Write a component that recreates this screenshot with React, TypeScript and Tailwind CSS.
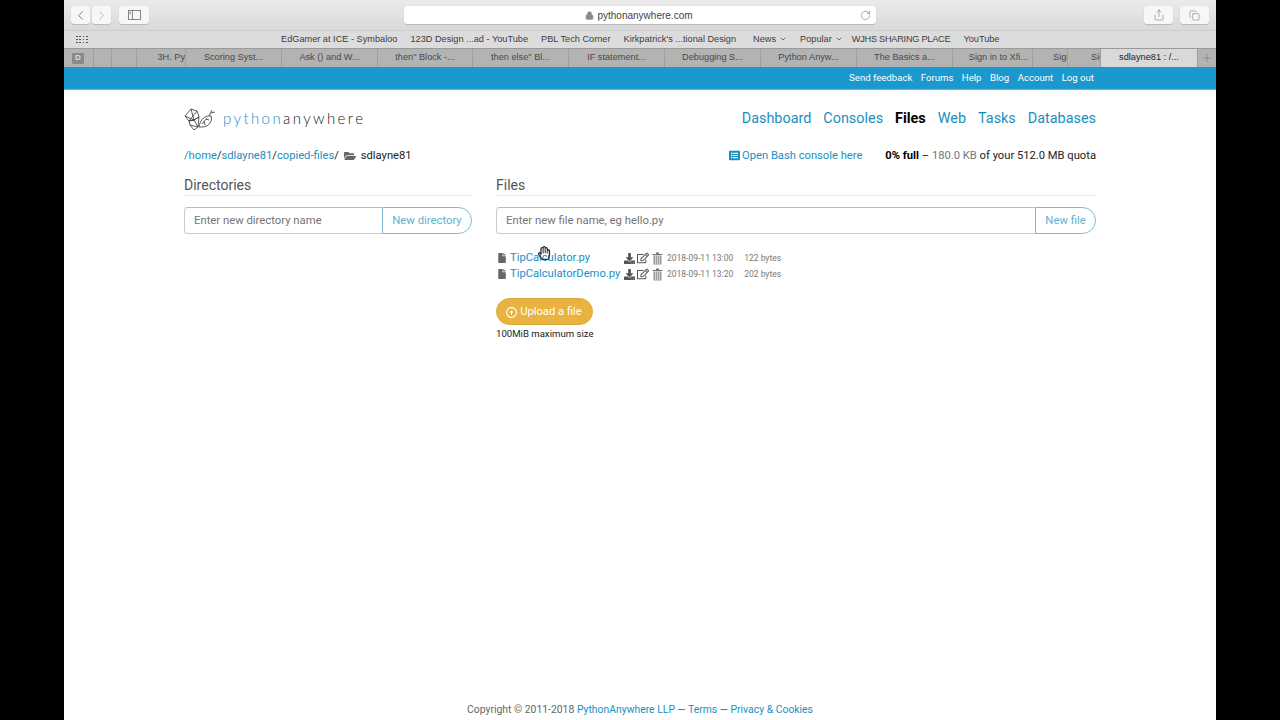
import { ChevronDown, ChevronLeft, ChevronRight, Lock, Plus, RotateCw, Share, Copy } from "lucide-react";
import { FaDownload, FaFile, FaFolderOpen, FaListAlt, FaRegEdit, FaRegHandPaper } from "react-icons/fa";
import { MdOutlineArrowCircleUp } from "react-icons/md";

const SAFARI = "font-['Liberation_Sans',sans-serif]";
const LINK = "text-[#1a8fbf]";

const bookmarks: { label: string; menu?: boolean; className?: string }[] = [
  { label: "EdGamer at ICE - Symbaloo" },
  { label: "123D Design ...ad - YouTube" },
  { label: "PBL Tech Corner" },
  { label: "Kirkpatrick's ...tional Design" },
  { label: "News", menu: true, className: "ml-[4px]" },
  { label: "Popular", menu: true },
  { label: "WJHS SHARING PLACE", className: "-ml-[4px] tracking-[-0.25px]" },
  { label: "YouTube" },
];

const tabs: { label: string; w: string; align?: string }[] = [
  { label: "", w: "w-[18px]" },
  { label: "", w: "w-[25px]" },
  { label: "3H. Py", w: "w-[49px]", align: "justify-end" },
  { label: "Scoring Syst...", w: "w-[96px]" },
  { label: "Ask () and W...", w: "w-[96px]" },
  { label: 'then" Block -...', w: "w-[95px]" },
  { label: 'then else" Bl...', w: "w-[96px]" },
  { label: "IF statement...", w: "w-[96px]" },
  { label: "Debugging S...", w: "w-[96px]" },
  { label: "Python Anyw...", w: "w-[96px]" },
  { label: "The Basics a...", w: "w-[96px]" },
  { label: "Sign in to Xfi...", w: "w-[80px]", align: "justify-end pr-1" },
  { label: "Sign", w: "w-[35px]", align: "justify-start pl-[20px]" },
  { label: "Sign", w: "w-[33px]", align: "justify-start pl-[23px]" },
];

const topLinks = ["Send feedback", "Forums", "Help", "Blog", "Account", "Log out"];
const navLinks = ["Dashboard", "Consoles", "Files", "Web", "Tasks", "Databases"];

const files = [
  { name: "TipCalculator.py", date: "2018-09-11 13:00", size: "122 bytes" },
  { name: "TipCalculatorDemo.py", date: "2018-09-11 13:20", size: "202 bytes" },
];

function ToolButton({ children, className }: { children: React.ReactNode; className: string }) {
  return (
    <div className={`flex h-[18px] items-center justify-center rounded-[3px] bg-[#f7f7f7] shadow-[0_1px_1px_#b8b8b8] ${className}`}>
      {children}
    </div>
  );
}

function Logo() {
  return (
    <svg width="32" height="24" viewBox="0 0 32 24" fill="none" stroke="#333" strokeWidth="0.8" strokeLinejoin="round">
      <path d="M1 9 L7 2 L13 4 L15 10 L10 13 L5 14 Z M7 2 L10 13 M13 4 L5 14 M1 9 L10 13" />
      <path d="M5 14 L10 13 L14 20 L10 23 L6 18 Z M10 13 L15 10 L14 20 M6 18 L14 20" />
      <path d="M15 20 C16 12 22 8 27 9 C29 14 25 21 15 20 Z M18 17 L23 11 M21 18 L20 14 M25 13 L22 12" />
      <path d="M25 9 L28 3 M27 6 L31 5" />
    </svg>
  );
}

function TrashIcon() {
  return (
    <svg width="11" height="13" viewBox="0 0 11 13" className="ml-[1px]">
      <path d="M0.5 2 H10.5 V3 H0.5 Z M4 0.5 H7 V2 H4 Z" fill="#777777" />
      <path d="M1.5 3.5 H9.5 V12.5 H1.5 Z" fill="#999999" />
      <path d="M3.5 4 V12 M5.5 4 V12 M7.5 4 V12" stroke="#e4e4e4" strokeWidth="0.8" />
    </svg>
  );
}

function InputGroup({ placeholder, button, inputClass, buttonClass }: { placeholder: string; button: string; inputClass: string; buttonClass: string }) {
  return (
    <div className="flex h-[27px] text-[11.3px]">
      <div className={`flex items-center rounded-l-[4px] border border-r-0 border-[#cccccc] border-t-[#bbbbbb] pl-[9px] pt-[1px] text-[#757575] ${inputClass}`}>
        {placeholder}
      </div>
      <div className={`flex items-center justify-center rounded-r-[14px] border border-[#7fb9d2] pt-[1px] text-[#5fb0d0] ${buttonClass}`}>
        {button}
      </div>
    </div>
  );
}

function SectionTitle({ children }: { children: React.ReactNode }) {
  return <h2 className="h-[21px] border-b border-[#d5eef5] text-[14px] leading-[20px] text-[#555555]">{children}</h2>;
}

export default function App() {
  return (
    <div className="flex h-[720px] w-[1280px] justify-center overflow-hidden bg-black">
      <div className="relative flex w-[1152px] flex-col bg-white">
        {/* safari toolbar */}
        <div className="flex h-[30px] items-center bg-gradient-to-b from-[#ebebeb] to-[#d9d9d9] px-[7px]">
          <div className="flex flex-1 items-center">
            <ToolButton className="w-[19px] text-[#666666]">
              <ChevronLeft size={15} strokeWidth={1.3} />
            </ToolButton>
            <ToolButton className="ml-[2px] w-[19px] text-[#aaaaaa]">
              <ChevronRight size={15} strokeWidth={1.3} />
            </ToolButton>
            <ToolButton className="ml-[8px] w-[30px]">
              <svg width="13" height="10" viewBox="0 0 13 10" fill="none" stroke="#666" strokeWidth="0.8">
                <rect x="0.5" y="0.5" width="12" height="9" />
                <path d="M4.5 0.5 V9.5" />
                <path d="M1.5 2.5 H3 M1.5 4 H3" />
              </svg>
            </ToolButton>
          </div>
          <div className="flex h-[18px] w-[472px] items-center rounded-[3px] bg-white shadow-[0_1px_1px_#b8b8b8]">
            <div className={`flex flex-1 items-center justify-center gap-[3px] pl-[14px] text-[10px] text-[#444444] ${SAFARI}`}>
              <Lock size={9} fill="#888888" stroke="#888888" />
              pythonanywhere.com
            </div>
            <RotateCw size={11} strokeWidth={1.2} className="mr-[5px] text-[#666666]" />
          </div>
          <div className="flex flex-1 items-center justify-end gap-[7px]">
            <ToolButton className="w-[29px] text-[#777777]">
              <Share size={12} strokeWidth={1.2} />
            </ToolButton>
            <ToolButton className="w-[29px] text-[#777777]">
              <Copy size={11} strokeWidth={1.2} />
            </ToolButton>
          </div>
        </div>

        {/* bookmarks */}
        <div className={`flex h-[18px] items-center border-t border-[#cdcdcd] bg-[#dcdcdc] text-[9.2px] text-[#3c3c3c] ${SAFARI}`}>
          <div className="ml-[12px] grid w-[12px] grid-cols-4 gap-[1.5px]">
            {Array.from({ length: 12 }).map((_, i) => (
              <span key={i} className="h-[1.5px] w-[1.5px] bg-[#555555]" />
            ))}
          </div>
          <div className="ml-[193px] flex items-center gap-[13px]">
            {bookmarks.map((b) => (
              <span key={b.label} className={`flex items-center gap-[3px] whitespace-nowrap ${b.className ?? ""}`}>
                {b.label}
                {b.menu && <ChevronDown size={8} strokeWidth={2} />}
              </span>
            ))}
          </div>
        </div>

        {/* tabs */}
        <div className={`flex h-[19px] border-t border-[#9a9a9a] bg-[#b3b3b3] text-[9.2px] text-[#4a4a4a] ${SAFARI}`}>
          <div className="flex w-[30px] items-center border-r border-[#9f9f9f] pl-[8px]">
            <span className="flex h-[11px] w-[12px] items-center justify-center rounded-[1px] bg-[#8a8a8a] text-[8px] font-bold text-[#dddddd]">D</span>
          </div>
          {tabs.map((t, i) => (
            <div key={i} className={`flex items-center justify-center overflow-hidden whitespace-nowrap border-r border-[#9f9f9f] ${t.w} ${t.align ?? ""}`}>
              {t.label}
            </div>
          ))}
          <div className="flex w-[96px] items-center justify-center bg-[#d9d9d9] text-[#222222]">sdlayne81 : /...</div>
          <div className="flex flex-1 items-center justify-center border-l border-[#9f9f9f] text-[#777777]">
            <Plus size={12} strokeWidth={1.2} />
          </div>
        </div>

        {/* page */}
        <div className="flex flex-1 flex-col font-['Roboto',sans-serif]">
          <div className="flex h-[23px] items-center justify-end gap-[8.5px] border-b border-[#5dbbdc] bg-[#1b98cd] pr-[122px] text-[9.6px] text-white">
            {topLinks.map((l) => (
              <span key={l}>{l}</span>
            ))}
          </div>

          <div className="flex flex-1 flex-col px-[120px]">
            <div className="mt-[17px] flex h-[24px] items-center justify-between">
              <div className="flex items-center">
                <Logo />
                <span className="mb-[2px] ml-[7px] font-['Lato',sans-serif] text-[15px] font-light tracking-[2.4px] text-[#222222]">
                  <span className="text-[#1a8fbf]">python</span>anywhere
                </span>
              </div>
              <nav className="flex items-center gap-[12px] text-[14.4px]">
                {navLinks.map((l) => (
                  <span key={l} className={l === "Files" ? "font-bold text-black" : LINK}>
                    {l}
                  </span>
                ))}
              </nav>
            </div>

            <div className="mt-[15px] flex h-[20px] items-center justify-between text-[11.2px]">
              <div className="flex items-center text-[#222222]">
                <span className={LINK}>/home</span>/<span className={LINK}>sdlayne81</span>/<span className={LINK}>copied-files</span>/
                <FaFolderOpen size={12} className="ml-[5px] mr-[5px] text-[#666666]" />
                sdlayne81
              </div>
              <div className="flex items-center">
                <span className={`flex items-center gap-[2px] ${LINK}`}>
                  <FaListAlt size={11} />
                  Open Bash console here
                </span>
                <span className="ml-[23px] text-[#222222]">
                  <b className="text-black">0% full</b> – <span className="text-[#777777]">180.0 KB</span> of your 512.0 MB quota
                </span>
              </div>
            </div>

            <div className="mt-[9px] flex gap-[24px]">
              <section className="w-[288px]">
                <SectionTitle>Directories</SectionTitle>
                <div className="mt-[11px]">
                  <InputGroup placeholder="Enter new directory name" button="New directory" inputClass="w-[198px]" buttonClass="w-[90px]" />
                </div>
              </section>

              <section className="flex-1">
                <SectionTitle>Files</SectionTitle>
                <div className="mt-[11px]">
                  <InputGroup placeholder="Enter new file name, eg hello.py" button="New file" inputClass="w-[539px]" buttonClass="w-[61px]" />
                </div>

                <div className="mt-[16px] text-[11.2px]">
                  {files.map((f) => (
                    <div key={f.name} className="flex h-[16px] items-center">
                      <FaFile size={10} className="ml-[1px] text-[#666666]" />
                      <span className={`ml-[3px] w-[114px] whitespace-nowrap pt-[1px] ${LINK}`}>{f.name}</span>
                      <span className="flex items-center gap-[2px] text-[#555555]">
                        <FaDownload size={11} />
                        <FaRegEdit size={12} />
                        <TrashIcon />
                      </span>
                      <span className="ml-[4px] text-[8.5px] text-[#777777]">{f.date}</span>
                      <span className="ml-[11px] text-[8.5px] text-[#777777]">{f.size}</span>
                    </div>
                  ))}
                </div>

                <div className="mt-[16px] flex h-[27px] w-[97px] items-center justify-center gap-[2px] rounded-[14px] border border-[#d9a93f] bg-[#e8b33f] pr-[2px] pt-[1px] text-[11.2px] text-white">
                  <MdOutlineArrowCircleUp size={13} />
                  Upload a file
                </div>
                <p className="mt-[1px] text-[9.6px] leading-[16px] text-[#222222]">100MiB maximum size</p>
              </section>
            </div>

            <footer className="mt-auto flex h-[20px] items-center justify-center text-[10.4px] text-[#666666]">
              <span>
                Copyright © 2011-2018 <span className={LINK}>PythonAnywhere LLP</span> — <span className={LINK}>Terms</span> — <span className={LINK}>Privacy &amp; Cookies</span>
              </span>
            </footer>
          </div>
        </div>

        {/* mouse pointer */}
        <FaRegHandPaper size={14} className="absolute left-[473px] top-[246px] text-[#333333]" />
      </div>
    </div>
  );
}
